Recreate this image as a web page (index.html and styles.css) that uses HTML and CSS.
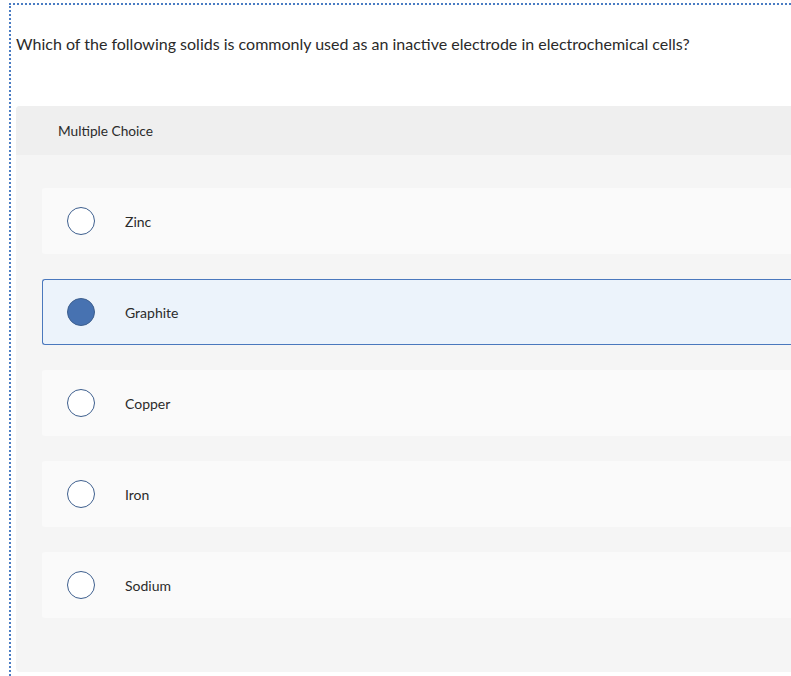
FILE: index.html
```html
<!DOCTYPE html>
<html>
<head>
<meta charset="utf-8">
<link rel="stylesheet" href="styles.css">
</head>
<body>
<div class="frame">
  <p class="question">Which of the following solids is commonly used as an inactive electrode in electrochemical cells?</p>
  <div class="panel">
    <div class="panel-head">Multiple Choice</div>
    <div class="panel-body">
      <div class="option"><span class="radio"></span><span class="label">Zinc</span></div>
      <div class="option selected"><span class="radio"></span><span class="label">Graphite</span></div>
      <div class="option"><span class="radio"></span><span class="label">Copper</span></div>
      <div class="option"><span class="radio"></span><span class="label">Iron</span></div>
      <div class="option"><span class="radio"></span><span class="label">Sodium</span></div>
    </div>
  </div>
</div>
</body>
</html>
```
FILE: styles.css
```css
html, body {
  margin: 0;
  padding: 0;
  background: #ffffff;
  overflow: hidden;
  height: 676px;
}
body {
  font-family: "Lato", "Open Sans", sans-serif;
  color: #2b2b2b;
}
.frame {
  margin: 3px 0 0 9px;
  height: 673px;
  border-top: 2px dotted #4a7cc3;
  border-left: 2px dotted #4a7cc3;
  padding-left: 5px;
  box-sizing: border-box;
}
.question {
  margin: 29px 0 0 0;
  font-size: 16px;
  line-height: 20px;
  color: #2a2a2a;
}
.panel {
  margin-top: 52px;
  background: #f5f5f5;
  border-radius: 4px 0 0 4px;
}
.panel-head {
  height: 49px;
  background: #efefef;
  display: flex;
  align-items: center;
  padding-left: 42px;
  font-size: 13.7px;
  color: #2b2b2b;
  border-radius: 4px 0 0 0;
}
.panel-body {
  padding: 33px 0 54px 26px;
  display: flex;
  flex-direction: column;
  gap: 25px;
}
.option {
  height: 66px;
  background: #fafafa;
  border-radius: 3px 0 0 3px;
  display: flex;
  align-items: center;
  padding-left: 25px;
  box-sizing: border-box;
  border: 1px solid transparent;
  border-right: none;
}
.option.selected {
  background: #ecf3fb;
  border-color: #4a78bd;
}
.radio {
  width: 28px;
  height: 28px;
  box-sizing: border-box;
  border: 1.5px solid #3e5f8e;
  border-radius: 50%;
  background: #ffffff;
  flex: none;
  margin-left: -1px;
}
.option.selected .radio {
  background: #4772b1;
  border-color: #3e5f8e;
}
.label {
  margin-left: 30px;
  font-size: 14px;
  color: #2b2b2b;
}
```
